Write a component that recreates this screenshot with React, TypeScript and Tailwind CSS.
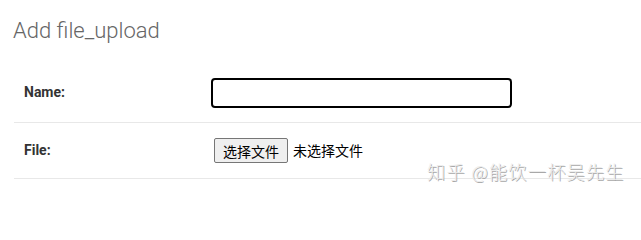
export default function App() {
  return (
    <div className="relative w-[641px] h-[200px] bg-white overflow-hidden font-['Roboto','Noto_Sans_CJK_SC',sans-serif]">
      {/* Title */}
      <h1 className="pl-[13px] pt-[16px] text-[22px] leading-[30px] font-light text-[#666]">
        Add file_upload
      </h1>

      {/* Form rows */}
      <div className="mt-[17px] ml-[14px]">
        <div className="h-[60px] flex items-center border-b border-[#e8e8e8]">
          <label className="w-[197px] pl-[10px] text-[14px] font-bold text-[#333]">Name:</label>
          <input
            type="text"
            className="w-[301px] h-[30px] border-2 border-black rounded-[4px] outline-none"
          />
        </div>
        <div className="h-[56px] flex items-center border-b border-[#e8e8e8]">
          <label className="w-[200px] pl-[10px] text-[14px] font-bold text-[#333]">File:</label>
          <button className="h-[25px] w-[74px] border border-[#767676] rounded-[2px] bg-[#efefef] text-[14px] leading-none text-black font-['Noto_Sans_CJK_SC',sans-serif]">
            选择文件
          </button>
          <span className="ml-[5px] text-[14px] text-black font-['Noto_Sans_CJK_SC',sans-serif]">未选择文件</span>
        </div>
      </div>

      {/* Watermark */}
      <div className="absolute left-[427px] top-[159px] text-[18px] leading-[24px] tracking-[1.4px] text-[#ececec] [text-shadow:1px_1px_0_#a8a8a8] font-['Noto_Sans_CJK_SC',sans-serif] font-light whitespace-nowrap">
        知乎 @能饮一杯吴先生
      </div>
    </div>
  );
}
